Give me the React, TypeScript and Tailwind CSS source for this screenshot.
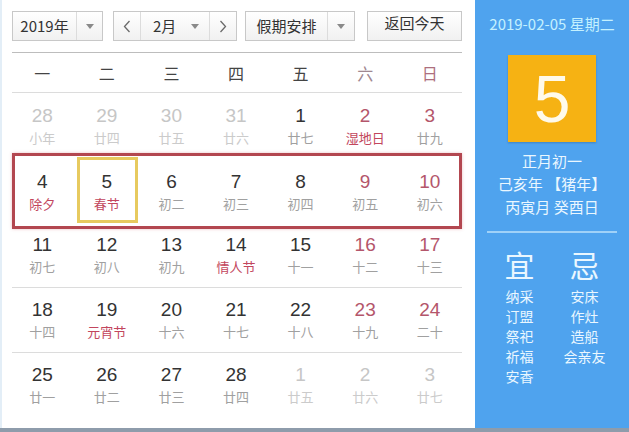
import React from "react";

type Day = {
  n: number;
  l: string;
  kind?: "other" | "weekend";
  fest?: boolean;
  sel?: boolean;
};

const rows: Day[][] = [
  [
    { n: 28, l: "小年", kind: "other" },
    { n: 29, l: "廿四", kind: "other" },
    { n: 30, l: "廿五", kind: "other" },
    { n: 31, l: "廿六", kind: "other" },
    { n: 1, l: "廿七" },
    { n: 2, l: "湿地日", kind: "weekend", fest: true },
    { n: 3, l: "廿九", kind: "weekend" },
  ],
  [
    { n: 4, l: "除夕", fest: true },
    { n: 5, l: "春节", fest: true, sel: true },
    { n: 6, l: "初二" },
    { n: 7, l: "初三" },
    { n: 8, l: "初四" },
    { n: 9, l: "初五", kind: "weekend" },
    { n: 10, l: "初六", kind: "weekend" },
  ],
  [
    { n: 11, l: "初七" },
    { n: 12, l: "初八" },
    { n: 13, l: "初九" },
    { n: 14, l: "情人节", fest: true },
    { n: 15, l: "十一" },
    { n: 16, l: "十二", kind: "weekend" },
    { n: 17, l: "十三", kind: "weekend" },
  ],
  [
    { n: 18, l: "十四" },
    { n: 19, l: "元宵节", fest: true },
    { n: 20, l: "十六" },
    { n: 21, l: "十七" },
    { n: 22, l: "十八" },
    { n: 23, l: "十九", kind: "weekend" },
    { n: 24, l: "二十", kind: "weekend" },
  ],
  [
    { n: 25, l: "廿一" },
    { n: 26, l: "廿二" },
    { n: 27, l: "廿三" },
    { n: 28, l: "廿四" },
    { n: 1, l: "廿五", kind: "other" },
    { n: 2, l: "廿六", kind: "other" },
    { n: 3, l: "廿七", kind: "other" },
  ],
];

const weekdays = ["一", "二", "三", "四", "五", "六", "日"];

const cjk = "font-['Noto_Sans_CJK_SC','Noto_Sans',sans-serif]";
const num = "font-['Liberation_Sans','Arial',sans-serif]";

function Caret() {
  return (
    <svg width="8" height="5" viewBox="0 0 8 5">
      <polygon points="0,0 8,0 4,5" fill="#8a8a8a" />
    </svg>
  );
}

function Chevron({ dir }: { dir: "left" | "right" }) {
  return (
    <svg width="8" height="13" viewBox="0 0 8 13">
      <path
        d={dir === "left" ? "M6.5 1 L1.5 6.5 L6.5 12" : "M1.5 1 L6.5 6.5 L1.5 12"}
        fill="none"
        stroke="#6a6a6a"
        strokeWidth="1.3"
      />
    </svg>
  );
}

const box =
  "h-[30px] border border-[#c8c8c8] bg-linear-to-b from-white to-[#f1f1f1] flex items-stretch text-[15px] text-[#333]";

function Toolbar() {
  return (
    <div className="flex ml-[2px] mt-[11px] gap-0">
      <div className={`${box} w-[91px]`}>
        <div className="flex-1 flex items-center justify-center">2019年</div>
        <div className="w-[26px] border-l border-[#dcdcdc] flex items-center justify-center">
          <Caret />
        </div>
      </div>
      <div className={`${box} w-[124px] ml-[10px]`}>
        <div className="w-[27px] border-r border-[#dcdcdc] flex items-center justify-center">
          <Chevron dir="left" />
        </div>
        <div className="flex-1 flex items-center pl-[12px] pr-[10px]">
          <span>2月</span>
          <span className="ml-auto flex">
            <Caret />
          </span>
        </div>
        <div className="w-[27px] border-l border-[#dcdcdc] flex items-center justify-center">
          <Chevron dir="right" />
        </div>
      </div>
      <div className={`${box} w-[110px] ml-[8px]`}>
        <div className="flex-1 flex items-center justify-center">假期安排</div>
        <div className="w-[27px] border-l border-[#dcdcdc] flex items-center justify-center">
          <Caret />
        </div>
      </div>
      <div className={`${box} w-[95px] ml-[12px] justify-center items-center`}>返回今天</div>
    </div>
  );
}

function Cell({ d }: { d: Day }) {
  const numColor =
    d.kind === "other"
      ? "text-[#c6c6c6]"
      : d.kind === "weekend"
      ? "text-[#b4566b]"
      : "text-[#333333]";
  const lunColor =
    d.kind === "other"
      ? "text-[#cbcbcb]"
      : d.fest
      ? "text-[#c2465d]"
      : "text-[#a0a0a0]";
  return (
    <div className="relative flex flex-col items-center">
      {d.sel && (
        <div className="absolute left-[2px] right-[1px] top-[-14px] bottom-[-8px] border-[3px] border-[#e7ca5f]" />
      )}
      <span className={`${num} text-[19px] leading-[22px] ${numColor}`}>{d.n}</span>
      <span className={`text-[13px] leading-[22px] ${lunColor}`}>{d.l}</span>
    </div>
  );
}

function DayRow({ days, className }: { days: Day[]; className: string }) {
  return (
    <div className={`grid grid-cols-7 ${className}`}>
      {days.map((d, i) => (
        <Cell key={i} d={d} />
      ))}
    </div>
  );
}

function Calendar() {
  return (
    <div className="w-[475px] h-full bg-white pl-[8px] border-l-[2px] border-[#e3eef7] flex flex-col">
      <div className="w-[452px]">
        <Toolbar />
        <div className="ml-[2px] mt-[11px] h-px bg-[#bdbdbd]" />
        <div className="grid grid-cols-7 h-[39px] items-center text-[16px]">
          {weekdays.map((w, i) => (
            <div
              key={w}
              className={`text-center ${i === 6 ? "text-[#ad6f7e]" : i === 5 ? "text-[#a08890]" : "text-[#444]"}`}
            >
              {w}
            </div>
          ))}
        </div>
        <div className="ml-[2px] h-px bg-[#dcdcdc]" />
        <DayRow days={rows[0]} className="h-[60px] pt-[12px]" />
        <div className="relative h-[76px]">
          <div className="absolute left-[2px] right-0 top-0 bottom-0 border-[3px] border-[#b34750] shadow-[0_0_3px_rgba(200,80,90,0.35)]" />
          <DayRow days={rows[1]} className="pt-[18px]" />
        </div>
        <DayRow days={rows[2]} className="h-[58px] pt-[5px]" />
        <div className="ml-[2px] h-px bg-[#dcdcdc]" />
        <DayRow days={rows[3]} className="h-[64px] pt-[11px]" />
        <div className="ml-[2px] h-px bg-[#dcdcdc]" />
        <DayRow days={rows[4]} className="pt-[11px]" />
      </div>
    </div>
  );
}

function SidePanel() {
  const yi = ["纳采", "订盟", "祭祀", "祈福", "安香"];
  const ji = ["安床", "作灶", "造船", "会亲友"];
  return (
    <div className="w-[154px] h-full bg-[#4fa3ee] flex flex-col items-center text-[#eaf7ff]">
      <div className="mt-[14px] text-[15px] leading-[20px] text-[#c4f1ff]">2019-02-05 星期二</div>
      <div className="mt-[21px] w-[88px] h-[87px] bg-[#f6b213] shadow-[0_1px_2px_rgba(0,0,0,0.2)] flex items-center justify-center">
        <span className={`${num} text-[66px] leading-none text-[#fffaea]`}>5</span>
      </div>
      <div className="mt-[7px] text-[15px] leading-[23px] text-center">
        <div>正月初一</div>
        <div>己亥年 【猪年】</div>
        <div>丙寅月 癸酉日</div>
      </div>
      <div className="mt-[13px] h-[2px] w-[130px] bg-[#9fd1f8]" />
      <div className="w-[130px] flex mt-[14px]">
        <div className="flex-1 flex flex-col items-center">
          <div className="text-[30px] leading-[34px]">宜</div>
          <div className="mt-[5px] text-[14px] leading-[20px] flex flex-col items-center">
            {yi.map((t) => (
              <div key={t}>{t}</div>
            ))}
          </div>
        </div>
        <div className="flex-1 flex flex-col items-center">
          <div className="text-[30px] leading-[34px]">忌</div>
          <div className="mt-[5px] text-[14px] leading-[20px] flex flex-col items-center">
            {ji.map((t) => (
              <div key={t}>{t}</div>
            ))}
          </div>
        </div>
      </div>
    </div>
  );
}

export default function App() {
  return (
    <div className={`w-[629px] h-[432px] flex flex-col bg-white ${cjk}`}>
      <div className="h-[428px] flex">
        <Calendar />
        <SidePanel />
      </div>
      <div className="h-[4px] bg-[#8e9cab]" />
    </div>
  );
}
